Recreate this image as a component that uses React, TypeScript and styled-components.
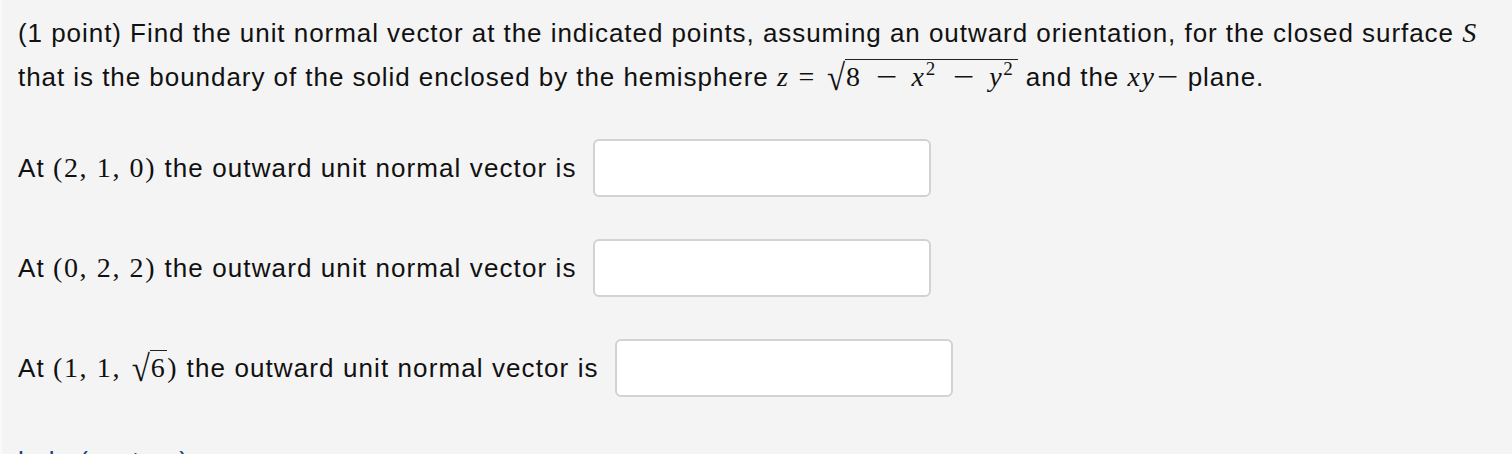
import type { ReactNode } from 'react';
import styled, { createGlobalStyle } from 'styled-components';

const GlobalStyle = createGlobalStyle`
  html, body {
    margin: 0;
    padding: 0;
    background: #f4f4f4;
  }
`;

const Problem = styled.div`
  display: flex;
  flex-direction: column;
  align-items: flex-start;
  padding: 11px 0 0 16px;
  font-family: 'Liberation Sans', Arial, sans-serif;
  font-size: 26px;
  letter-spacing: 0.95px;
  color: #111;
  border-left: 2px solid #f9f9f9;
  height: 454px;
  box-sizing: border-box;
  overflow: hidden;
`;

const Statement = styled.p`
  margin: 0;
  line-height: 44px;
  white-space: nowrap;
`;

const MathText = styled.span`
  font-family: 'Liberation Serif', 'Times New Roman', serif;
  font-size: 28px;
  letter-spacing: 1.6px;
`;

const Var = styled.i`
  font-style: italic;
`;

// binary operator with MathJax-like spacing
const Op = styled.span<{ $gap?: number }>`
  margin: 0 ${(p) => p.$gap ?? 9}px;
`;

// MathJax's minus is a long bar
const Minus = styled.span<{ $gap?: number }>`
  display: inline-block;
  width: 22px;
  text-align: center;
  letter-spacing: 0;
  margin: 0 ${(p) => p.$gap ?? 14}px;
  transform: scaleX(1.35);
`;

const Sup = styled.sup`
  font-size: 19px;
  vertical-align: 11px;
  line-height: 0;
  letter-spacing: 0;
  margin-left: 0;
  margin-right: 4px;
`;

const Radical = styled.span`
  display: inline-block;
  font-size: 33px;
  line-height: 0;
  transform: scaleY(1.12) translateY(2px);
  letter-spacing: 0;
  margin-left: 2px;
`;

const Radicand = styled.span`
  border-top: 1.5px solid #222;
  padding: 1px 1px 0;
`;

const Answers = styled.div`
  display: flex;
  flex-direction: column;
  gap: 42px;
  margin-top: 40px;
`;

const AnswerRow = styled.div`
  display: flex;
  align-items: center;
  gap: 16px;
`;

const Label = styled.span`
  white-space: nowrap;
  letter-spacing: 1.1px;
`;

const AnswerInput = styled.input`
  width: 338px;
  height: 58px;
  box-sizing: border-box;
  border: 2px solid #d2d2d2;
  border-radius: 6px;
  background: #fff;
  font-size: 20px;
`;

const HelpLink = styled.a`
  margin-top: 42px;
  line-height: 44px;
  color: #1b3d8f;
  text-decoration: none;
`;

const points: ReactNode[] = [
  <>(2, 1, 0)</>,
  <>(0, 2, 2)</>,
  <>
    (1, 1, <Radical>√</Radical>
    <Radicand>6</Radicand>)
  </>,
];

const App = () => {
  return (
    <>
      <GlobalStyle />
      <Problem>
        <Statement>
          (1 point) Find the unit normal vector at the indicated points, assuming an outward
          orientation, for the closed surface <MathText><Var>S</Var></MathText>
          <br />
          that is the boundary of the solid enclosed by the hemisphere{' '}
          <MathText>
            <Var>z</Var>
            <Op>=</Op>
            <Radical>√</Radical>
            <Radicand>
              8<Minus>−</Minus>
              <Var>x</Var>
              <Sup>2</Sup>
              <Minus>−</Minus>
              <Var>y</Var>
              <Sup>2</Sup>
            </Radicand>
          </MathText>{' '}
          and the{' '}
          <MathText>
            <Var>xy</Var>
            <Minus $gap={1}>−</Minus>
          </MathText>{' '}
          plane.
        </Statement>

        <Answers>
          {points.map((coords, i) => (
            <AnswerRow key={i}>
              <Label>
                At <MathText>{coords}</MathText> the outward unit normal vector is
              </Label>
              <AnswerInput type="text" />
            </AnswerRow>
          ))}
        </Answers>

        <HelpLink href="#">help (vectors)</HelpLink>
      </Problem>
    </>
  );
};

export default App;
